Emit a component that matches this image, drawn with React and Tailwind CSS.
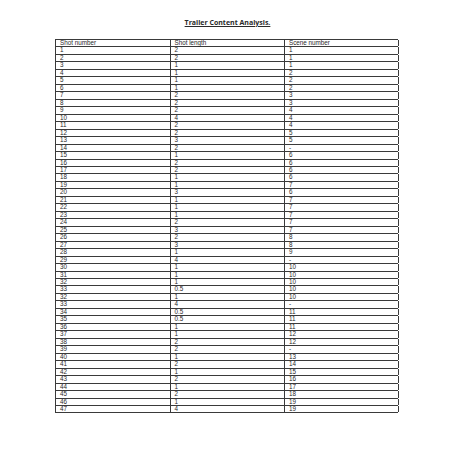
import React from "react";

const rows = [
  ["1", "2", "1"],
  ["2", "2", "1"],
  ["3", "1", "1"],
  ["4", "1", "2"],
  ["5", "1", "2"],
  ["6", "1", "2"],
  ["7", "2", "3"],
  ["8", "2", "3"],
  ["9", "2", "4"],
  ["10", "4", "4"],
  ["11", "2", "4"],
  ["12", "2", "5"],
  ["13", "3", "5"],
  ["14", "2", "-"],
  ["15", "1", "6"],
  ["16", "2", "6"],
  ["17", "2", "6"],
  ["18", "1", "6"],
  ["19", "1", "7"],
  ["20", "3", "6"],
  ["21", "1", "7"],
  ["22", "1", "7"],
  ["23", "1", "7"],
  ["24", "2", "7"],
  ["25", "3", "7"],
  ["26", "2", "8"],
  ["27", "3", "8"],
  ["28", "1", "9"],
  ["29", "4", "-"],
  ["30", "1", "10"],
  ["31", "1", "10"],
  ["32", "1", "10"],
  ["33", "0.5", "10"],
  ["32", "1", "10"],
  ["33", "4", "-"],
  ["34", "0.5", "11"],
  ["35", "0.5", "11"],
  ["36", "1", "11"],
  ["37", "1", "12"],
  ["38", "2", "12"],
  ["39", "2", "-"],
  ["40", "1", "13"],
  ["41", "2", "14"],
  ["42", "1", "15"],
  ["43", "2", "16"],
  ["44", "1", "17"],
  ["45", "2", "18"],
  ["46", "1", "19"],
  ["47", "4", "19"],
];

const allRows = [["Shot number", "Shot length", "Scene number"], ...rows];

export default function App() {
  return (
    <div
      className="w-[453px] h-[453px] bg-white text-[#2a2a2a] pt-[19px]"
      style={{ fontFamily: "'Open Sans', 'Liberation Sans', sans-serif" }}
    >
      {/* Title */}
      <h1 className="text-center text-[7px] leading-[8px] font-bold underline pl-[2px]">
        Trailer Content Analysis.
      </h1>

      {/* Table */}
      <div
        className="mt-[12px] ml-[55px] w-[343px] border-l border-t border-[#3a3a3a] text-[6.3px]"
        style={{ fontFamily: "'Liberation Sans', sans-serif" }}
      >
        {allRows.map((r, i) => (
          <div
            key={i}
            className="grid grid-cols-[114.5px_114.5px_114px] h-[7.48px] border-b border-[#3a3a3a]"
          >
            {r.map((c, j) => (
              <div
                key={j}
                className="border-r border-[#3a3a3a] pl-[4px] leading-[6.4px] whitespace-nowrap"
              >
                {c}
              </div>
            ))}
          </div>
        ))}
      </div>
    </div>
  );
}
